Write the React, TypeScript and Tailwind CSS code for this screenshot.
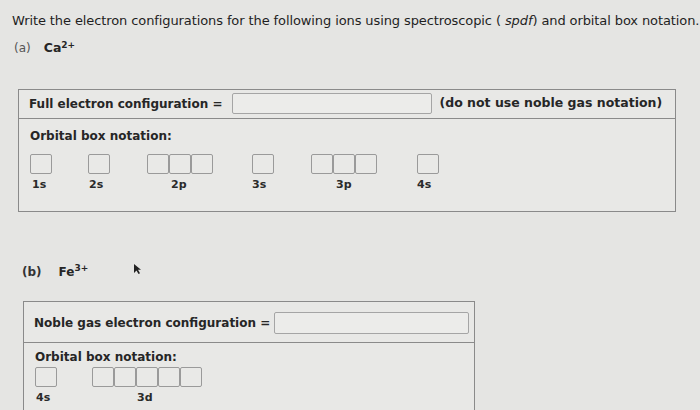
import React from "react";

const font = { fontFamily: '"DejaVu Sans", Verdana, sans-serif' };

function Orb({ n = 1 }: { n?: number }) {
  return (
    <div className="flex">
      {Array.from({ length: n }).map((_, i) => (
        <div
          key={i}
          className="w-[22px] h-[20px] border border-[#9a9a9a] rounded-[2px] bg-[#e9e9e7]"
        />
      ))}
    </div>
  );
}

function Orbital({ n, label, w, lx }: { n: number; label: string; w: number; lx: number }) {
  return (
    <div className="flex flex-col" style={{ width: w }}>
      <Orb n={n} />
      <span className="mt-[5px] text-[11px] font-bold text-[#2a2a2a] leading-none" style={{ paddingLeft: lx }}>
        {label}
      </span>
    </div>
  );
}

export default function App() {
  return (
    <div className="w-[700px] h-[410px] overflow-hidden bg-[#e5e5e3] text-[#262626] relative" style={font}>
      <p className="absolute left-[12px] top-[11px] text-[13px] tracking-[-0.1px] whitespace-nowrap text-[#1f1f1f]">
        Write the electron configurations for the following ions using spectroscopic ( <i>spdf</i>) and orbital box notation.
      </p>

      <div className="pt-[39px] pl-[14px] flex items-baseline gap-[13px] text-[12px]">
        <span className="text-[#555]">(a)</span>
        <span className="font-bold text-[12.5px]">
          Ca<sup className="text-[9px] font-bold">2+</sup>
        </span>
      </div>

      {/* part a */}
      <div className="ml-[18px] mt-[31px] w-[658px] border border-[#8a8a8a] bg-[#e8e8e6]">
        <div className="h-[29px] flex items-center pl-[10px] border-b border-[#8a8a8a] text-[12px] font-bold">
          <span>Full electron configuration =</span>
          <div className="ml-[10px] w-[200px] h-[21px] border border-[#a5a5a5] bg-[#ececea] rounded-[2px]" />
          <span className="ml-[7px] text-[12.5px]">(do not use noble gas notation)</span>
        </div>
        <div className="h-[92px] pl-[11px] pt-[8px]">
          <p className="text-[12px] font-bold">Orbital box notation:</p>
          <div className="flex mt-[9px]">
            <Orbital n={1} label="1s" w={58} lx={2} />
            <Orbital n={1} label="2s" w={59} lx={1} />
            <Orbital n={3} label="2p" w={105} lx={24} />
            <Orbital n={1} label="3s" w={59} lx={0} />
            <Orbital n={3} label="3p" w={106} lx={25} />
            <Orbital n={1} label="4s" w={40} lx={0} />
          </div>
        </div>
      </div>

      <div className="pt-[51px] pl-[22px] flex items-baseline gap-[17px] text-[12px] relative">
        <span className="text-[#333] font-semibold">(b)</span>
        <span className="font-semibold">
          Fe<sup className="text-[9px]">3+</sup>
        </span>
        <svg className="absolute left-[133px] top-[51px]" width="9" height="12" viewBox="0 0 9 12">
          <path d="M1 1 L1 10 L3.5 7.5 L5.5 11 L7 10.3 L5 6.8 L8 6.8 Z" fill="#222" />
        </svg>
      </div>

      {/* part b */}
      <div className="ml-[23px] mt-[20px] w-[452px] border border-[#8a8a8a] bg-[#e8e8e6]">
        <div className="h-[41px] flex items-center pl-[10px] pt-[2px] border-b border-[#8a8a8a] text-[12px] font-bold">
          <span>Noble gas electron configuration =</span>
          <div className="ml-[4px] w-[195px] h-[22px] border border-[#a5a5a5] bg-[#ececea] rounded-[2px]" />
        </div>
        <div className="h-[80px] pl-[11px] pt-[5px]">
          <p className="text-[12px] font-bold">Orbital box notation:</p>
          <div className="flex mt-[1px]">
            <Orbital n={1} label="4s" w={57} lx={1} />
            <Orbital n={5} label="3d" w={120} lx={45} />
          </div>
        </div>
      </div>
    </div>
  );
}
